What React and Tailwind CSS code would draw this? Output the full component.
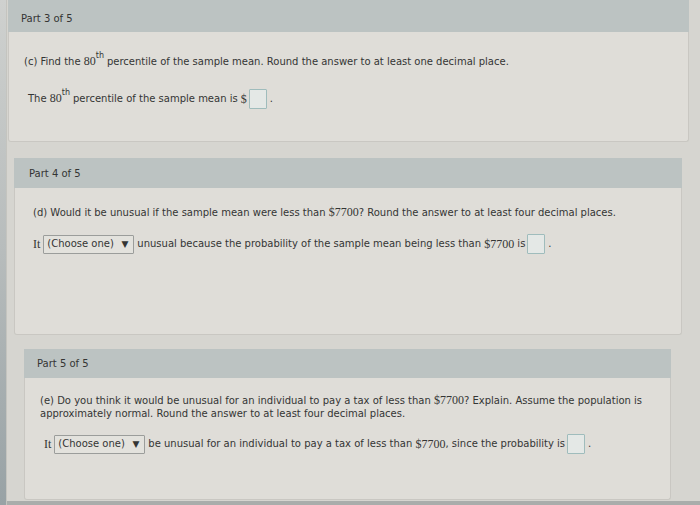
import React from 'react';

const serif = "font-['Liberation_Serif',serif]";

function AnswerBox() {
  return (
    <span className="inline-flex items-center align-middle ml-[2px]">
      <span className="inline-block w-[18px] h-[20px] border border-[#9fbcbc] bg-[#e4e8e6] rounded-[1px]" />
      <span className="ml-[3px]">.</span>
    </span>
  );
}

function ChooseOne() {
  return (
    <span className="inline-flex items-center h-[19px] w-[91px] pl-[3px] pr-[5px] mx-[3px] border border-[#9b9d9b] bg-[#e3e2dd] rounded-[1px] align-middle">
      <span>(Choose one)</span>
      <span className="ml-auto text-[9px] leading-none">▼</span>
    </span>
  );
}

function Ordinal({ n }) {
  return (
    <span className="whitespace-nowrap">
      <span className={`${serif} text-[12px]`}>{n}</span>
      <span className="text-[8px] relative -top-[7px] mr-[3px]">th</span>
    </span>
  );
}

function Money({ children }) {
  return <span className={`${serif} text-[12px]`}>{children}</span>;
}

function Panel({ title, className, headerClass, bodyClass, children }) {
  return (
    <div className={className}>
      <div className={`bg-[#bcc3c2] flex items-center ${headerClass}`}>
        <span>{title}</span>
      </div>
      <div className={`bg-[#dfddd8] border border-t-0 border-[#c9c7c2] rounded-b-[3px] ${bodyClass}`}>
        {children}
      </div>
    </div>
  );
}

export default function App() {
  return (
    <div className="w-[700px] h-[505px] bg-[#d6d5d0] flex overflow-hidden text-[#343534] font-['DejaVu_Sans',sans-serif] text-[10px]">
      <div className="w-[6px] bg-gradient-to-b from-[#cfd1cf] via-[#b7bcbc] to-[#98a2a5]" />
      <div className="flex-1 flex flex-col border-l border-[#c4c4bf]">
        {/* Part 3 */}
        <Panel
          title="Part 3 of 5"
          className="ml-[1px] w-[681px]"
          headerClass="h-[32px] pl-[13px] pt-[4px]"
          bodyClass="h-[110px] pl-[15px] pt-[21px]"
        >
          <p className="leading-[16px]">
            (c) Find the <Ordinal n="80" />percentile of the sample mean. Round the answer to at least one decimal place.
          </p>
          <p className="mt-[17px] pl-[4px] leading-[20px] flex items-center">
            <span>The&nbsp;</span>
            <Ordinal n="80" />
            <span>percentile of the sample mean is&nbsp;</span>
            <Money>$</Money>
            <AnswerBox />
          </p>
        </Panel>

        {/* Part 4 */}
        <Panel
          title="Part 4 of 5"
          className="mt-[16px] ml-[7px] w-[668px]"
          headerClass="h-[30px] pl-[15px]"
          bodyClass="h-[147px] pl-[18px] pt-[17px]"
        >
          <p className="leading-[14px]">
            (d) Would it be unusual if the sample mean were less than <Money>$7700</Money>? Round the answer to at least four decimal places.
          </p>
          <p className="mt-[13px] leading-[22px] flex items-center">
            <Money>It</Money>
            <ChooseOne />
            <span>unusual because the probability of the sample mean being less than&nbsp;</span>
            <Money>$7700</Money>
            <span>&nbsp;is</span>
            <AnswerBox />
          </p>
        </Panel>

        {/* Part 5 */}
        <Panel
          title="Part 5 of 5"
          className="mt-[14px] ml-[17px] w-[647px]"
          headerClass="h-[29px] pl-[13px]"
          bodyClass="h-[122px] pl-[15px] pt-[16px]"
        >
          <p className="leading-[13px]">
            (e) Do you think it would be unusual for an individual to pay a tax of less than <Money>$7700</Money>? Explain. Assume the population is
            <br />
            approximately normal. Round the answer to at least four decimal places.
          </p>
          <p className="mt-[13px] pl-[4px] leading-[22px] flex items-center">
            <Money>It</Money>
            <ChooseOne />
            <span>be unusual for an individual to pay a tax of less than&nbsp;</span>
            <Money>$7700</Money>
            <span>, since the probability is</span>
            <AnswerBox />
          </p>
        </Panel>
        <div className="flex-1" />
        <div className="h-[4px] bg-[#a9adab]" />
      </div>
    </div>
  );
}
